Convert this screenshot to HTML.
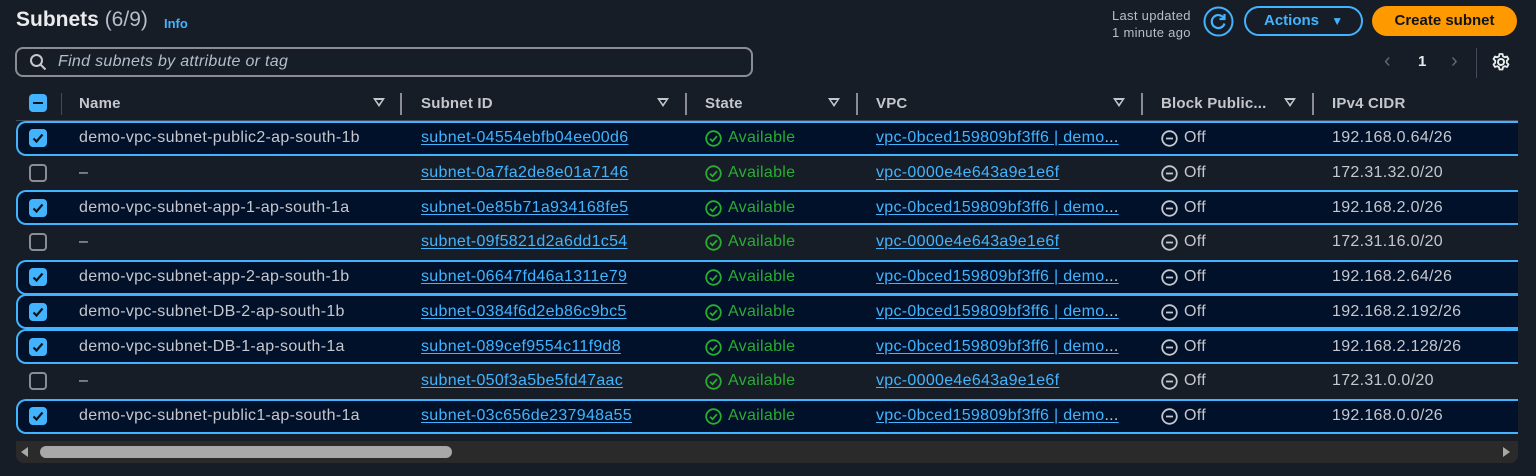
<!DOCTYPE html>
<html><head><meta charset="utf-8"><style>
*{margin:0;padding:0;box-sizing:border-box}
body{width:1536px;height:476px;background:#161d26;font-family:"Liberation Sans",sans-serif;color:#c6c6cd;position:relative;overflow:hidden;font-size:15px}
.a{position:absolute;white-space:nowrap}
.t{font-size:16px;letter-spacing:0.3px;line-height:20px}
.lnk{color:#42b4ff;text-decoration:underline;text-underline-offset:2px}
.row{position:absolute;left:16px;width:1502px;height:35px}
.sel{background:#001129;border:2px solid #42b4ff;border-radius:10px 0 0 10px;border-right:none}
.cb{position:absolute;left:29px;width:18px;height:18px;border-radius:4px}
.cb.on{background:#42b4ff}
.cb.off{border:2px solid #8c8c94}
.hd{font-weight:bold;color:#c6c6cd;letter-spacing:0.2px}
.sep{position:absolute;top:93px;width:2px;height:22px;background:#8c8c94}
.tri{position:absolute;top:98px;width:0;height:0;border-left:6px solid transparent;border-right:6px solid transparent;border-top:9px solid #c6c6cd}
.tri:after{content:"";position:absolute;left:-3px;top:-7px;border-left:3px solid transparent;border-right:3px solid transparent;border-top:4px solid #161d26}
.grn{color:#29ad32}
</style></head><body>
<div class="a" style="left:16px;top:8px;font-size:21px;font-weight:bold;color:#e9ebed">Subnets <span style="font-weight:normal;color:#b6bec9">(6/9)</span></div>
<div class="a" style="left:164px;top:16px;font-size:13px;font-weight:bold;color:#42b4ff">Info</div>
<div class="a" style="left:1112px;top:7px;font-size:13px;line-height:17px;color:#b6bec9;letter-spacing:0.3px">Last updated<br>1 minute ago</div>
<svg class="a" style="left:1203px;top:6px" width="31" height="31" viewBox="0 0 31 31"><circle cx="15.5" cy="15.5" r="14" fill="none" stroke="#42b4ff" stroke-width="2"/><path d="M21 12.5a6.5 6.5 0 1 0 .5 5" fill="none" stroke="#42b4ff" stroke-width="2.2"/><path d="M21.5 8v5h-5" fill="none" stroke="#42b4ff" stroke-width="2.2"/></svg>
<div class="a" style="left:1244px;top:6px;width:119px;height:30px;border:2px solid #42b4ff;border-radius:16px;color:#42b4ff;font-weight:bold;font-size:15px;line-height:26px;padding-left:18px">Actions <span style="font-size:12px;margin-left:8px">▼</span></div>
<div class="a" style="left:1372px;top:6px;width:145px;height:30px;background:#ff9900;border-radius:16px;color:#0f141a;font-weight:bold;font-size:15px;line-height:30px;text-align:center">Create subnet</div>
<div class="a" style="left:15px;top:47px;width:738px;height:30px;border:2px solid #8c8c94;border-radius:8px"></div>
<svg class="a" style="left:29px;top:53px" width="18" height="18"><circle cx="7.5" cy="7.5" r="5.5" fill="none" stroke="#c6c6cd" stroke-width="2"/><path d="M11.5 11.5l5 5" stroke="#c6c6cd" stroke-width="2"/></svg>
<div class="a t" style="left:58px;top:52px;font-style:italic;color:#b6bec9">Find subnets by attribute or tag</div>
<div class="a" style="left:1384px;top:50px;color:#5f6b7a;font-size:20px">‹</div>
<div class="a" style="left:1418px;top:53px;font-weight:bold;color:#e9ebed">1</div>
<div class="a" style="left:1451px;top:50px;color:#5f6b7a;font-size:20px">›</div>
<div class="a" style="left:1476px;top:48px;width:1px;height:30px;background:#414d5c"></div>
<svg class="a" style="left:1491px;top:52px" width="20" height="20" viewBox="0 0 20 20"><circle cx="10" cy="10" r="3" fill="none" stroke="#e9ebed" stroke-width="2"/><path d="M8.5 2h3l.5 2.3 1.8 1 2.2-.8 1.5 2.6-1.7 1.6v2.1l1.7 1.6-1.5 2.6-2.2-.8-1.8 1-.5 2.3h-3l-.5-2.3-1.8-1-2.2.8-1.5-2.6 1.7-1.6V8.7L2.5 7.1 4 4.5l2.2.8 1.8-1z" fill="none" stroke="#e9ebed" stroke-width="1.8" stroke-linejoin="round"/></svg>
<div class="a" style="left:29px;top:94px;width:18px;height:18px;border-radius:4px;background:#42b4ff"><div style="position:absolute;left:4px;top:8px;width:10px;height:2px;background:#0f141a"></div></div>
<div class="sep" style="left:61px;width:1px;background:#414d5c"></div>
<div class="a hd" style="left:79px;top:95px">Name</div><div class="tri" style="left:373px"></div><div class="sep" style="left:400px"></div>
<div class="a hd" style="left:421px;top:95px">Subnet ID</div><div class="tri" style="left:657px"></div><div class="sep" style="left:685px"></div>
<div class="a hd" style="left:705px;top:95px">State</div><div class="tri" style="left:828px"></div><div class="sep" style="left:856px"></div>
<div class="a hd" style="left:876px;top:95px">VPC</div><div class="tri" style="left:1113px"></div><div class="sep" style="left:1141px"></div>
<div class="a hd" style="left:1161px;top:95px">Block Public...</div><div class="tri" style="left:1284px"></div><div class="sep" style="left:1312px"></div>
<div class="a hd" style="left:1332px;top:95px">IPv4 CIDR</div>
<div class="a" style="left:16px;top:120px;width:1502px;height:1px;background:#414d5c"></div>
<div id="rows"></div>
<div class="a" style="left:16px;top:441px;width:1502px;height:22px;background:#2a2a2a;border-radius:0 0 8px 8px"></div>
<div class="a" style="left:21px;top:447px;border-top:5px solid transparent;border-bottom:5px solid transparent;border-right:7px solid #a8a8a8"></div>
<div class="a" style="left:40px;top:446px;width:412px;height:12px;background:#a8a8a8;border-radius:6px"></div>
<div class="a" style="left:1503px;top:447px;border-top:5px solid transparent;border-bottom:5px solid transparent;border-left:7px solid #a8a8a8"></div>
<script>
var d=[
[1,"demo-vpc-subnet-public2-ap-south-1b","subnet-04554ebfb04ee00d6",1,"192.168.0.64/26"],
[0,"–","subnet-0a7fa2de8e01a7146",0,"172.31.32.0/20"],
[1,"demo-vpc-subnet-app-1-ap-south-1a","subnet-0e85b71a934168fe5",1,"192.168.2.0/26"],
[0,"–","subnet-09f5821d2a6dd1c54",0,"172.31.16.0/20"],
[1,"demo-vpc-subnet-app-2-ap-south-1b","subnet-06647fd46a1311e79",1,"192.168.2.64/26"],
[1,"demo-vpc-subnet-DB-2-ap-south-1b","subnet-0384f6d2eb86c9bc5",1,"192.168.2.192/26"],
[1,"demo-vpc-subnet-DB-1-ap-south-1a","subnet-089cef9554c11f9d8",1,"192.168.2.128/26"],
[0,"–","subnet-050f3a5be5fd47aac",0,"172.31.0.0/20"],
[1,"demo-vpc-subnet-public1-ap-south-1a","subnet-03c656de237948a55",1,"192.168.0.0/26"]];
var h="";
d.forEach(function(r,i){var c=138+i*34.75,t=c-17.5,ty=c-10;
if(r[0])h+='<div class="row sel" style="top:'+(t)+'px"></div>';
h+='<div class="cb '+(r[0]?'on':'off')+' a" style="top:'+(c-9)+'px">'+(r[0]?'<svg width="18" height="18" style="position:absolute;left:0;top:0"><path d="M4.5 9.5l3 3 6-7" fill="none" stroke="#0f141a" stroke-width="2.2"/></svg>':'')+'</div>';
h+='<div class="a t" style="left:79px;top:'+ty+'px">'+r[1]+'</div>';
h+='<div class="a t lnk" style="left:421px;top:'+ty+'px">'+r[2]+'</div>';
h+='<svg class="a" style="left:705px;top:'+(c-8)+'px" width="17" height="17"><circle cx="8.5" cy="8.5" r="7.3" fill="none" stroke="#29ad32" stroke-width="1.8"/><path d="M5 8.7l2.5 2.5 4.5-5" fill="none" stroke="#29ad32" stroke-width="1.8"/></svg>';
h+='<div class="a t grn" style="left:728px;top:'+ty+'px">Available</div>';
h+='<div class="a t lnk" style="left:876px;top:'+ty+'px">'+(r[3]?'vpc-0bced159809bf3ff6 | demo<span style="text-decoration:none;color:#c6c6cd">...</span>':'vpc-0000e4e643a9e1e6f')+'</div>';
h+='<svg class="a" style="left:1161px;top:'+(c-8)+'px" width="17" height="17"><circle cx="8.5" cy="8.5" r="7.3" fill="none" stroke="#c6c6cd" stroke-width="1.8"/><path d="M5 8.5h7" stroke="#c6c6cd" stroke-width="1.8"/></svg>';
h+='<div class="a t" style="left:1184px;top:'+ty+'px">Off</div>';
h+='<div class="a t" style="left:1332px;top:'+ty+'px">'+r[4]+'</div>';
});
document.getElementById("rows").innerHTML=h;
</script>
</body></html>
